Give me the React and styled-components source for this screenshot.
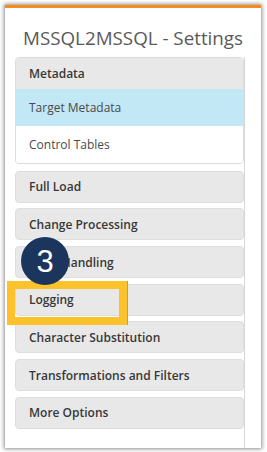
import React from 'react';
import styled, { createGlobalStyle } from 'styled-components';

const GlobalStyle = createGlobalStyle`
  html, body {
    margin: 0;
    padding: 0;
    background: #ffffff;
  }
  body {
    font-family: "Open Sans", "Noto Sans", sans-serif;
  }
`;

const Page = styled.div`
  width: 267px;
  height: 452px;
  padding: 5px 0 0 5px;
  box-sizing: border-box;
`;

const Panel = styled.div`
  position: relative;
  width: 256px;
  height: 443px;
  box-sizing: border-box;
  background: #ffffff;
  border-top: 3px solid #f68b1f;
  box-shadow: 0 0 4px 1px rgba(0, 0, 0, 0.45);
  display: flex;
  flex-direction: column;
`;

const Title = styled.h1`
  margin: 0;
  padding: 17px 0 0 18px;
  height: 49px;
  box-sizing: border-box;
  font-weight: 400;
  font-size: 18.8px;
  line-height: 26px;
  color: #5a5a5a;
  white-space: nowrap;
`;

const Body = styled.div`
  flex: 1;
  display: flex;
`;

const Sidebar = styled.div`
  width: 240px;
  box-sizing: border-box;
  padding: 0 0 0 10px;
  border-right: 1px solid #d6d6d6;
  display: flex;
  flex-direction: column;
  gap: 5.7px;
`;

const Group = styled.div`
  border: 1px solid #dcdcdc;
  border-radius: 4px;
  overflow: hidden;
  background: #ffffff;
  margin-bottom: 1px;
`;

const Head = styled.div`
  height: ${(p) => (p.$inGroup ? 31 : 30)}px;
  display: flex;
  align-items: center;
  padding-left: 13px;
  background: #e8e8e8;
  font-size: 12px;
  font-weight: 600;
  color: #383838;
  white-space: nowrap;
`;

const Card = styled(Head)`
  border: 1px solid #dedede;
  border-radius: 4px;
`;

const Item = styled.div`
  height: 37px;
  display: flex;
  align-items: center;
  padding-left: 13px;
  font-size: 12px;
  color: #4a4a4a;
  background: ${(p) => (p.$active ? '#c2e7f5' : '#ffffff')};
`;

const Highlight = styled.div`
  position: absolute;
  left: 2px;
  top: 273px;
  width: 120px;
  height: 44px;
  box-sizing: border-box;
  border: 8px solid #fcc22b;
  box-shadow: 1px 0 0 #f08a3a;
`;

const Badge = styled.div`
  position: absolute;
  left: 16px;
  top: 229px;
  width: 48px;
  height: 48px;
  border-radius: 50%;
  background: #1b355d;
  color: #ffffff;
  display: flex;
  align-items: center;
  justify-content: center;
  font-family: "Liberation Sans", Arial, sans-serif;
  font-size: 31px;
  line-height: 1;
`;

const sections = [
  'Full Load',
  'Change Processing',
  'Error Handling',
  'Logging',
  'Character Substitution',
  'Transformations and Filters',
  'More Options',
];

export default function App() {
  return (
    <>
      <GlobalStyle />
      <Page>
        <Panel>
          <Title>MSSQL2MSSQL - Settings</Title>
          <Body>
            <Sidebar>
              <Group>
                <Head $inGroup>Metadata</Head>
                <Item $active>Target Metadata</Item>
                <Item>Control Tables</Item>
              </Group>
              {sections.map((s) => (
                <Card key={s}>{s}</Card>
              ))}
            </Sidebar>
          </Body>
          <Highlight />
          <Badge>3</Badge>
        </Panel>
      </Page>
    </>
  );
}
